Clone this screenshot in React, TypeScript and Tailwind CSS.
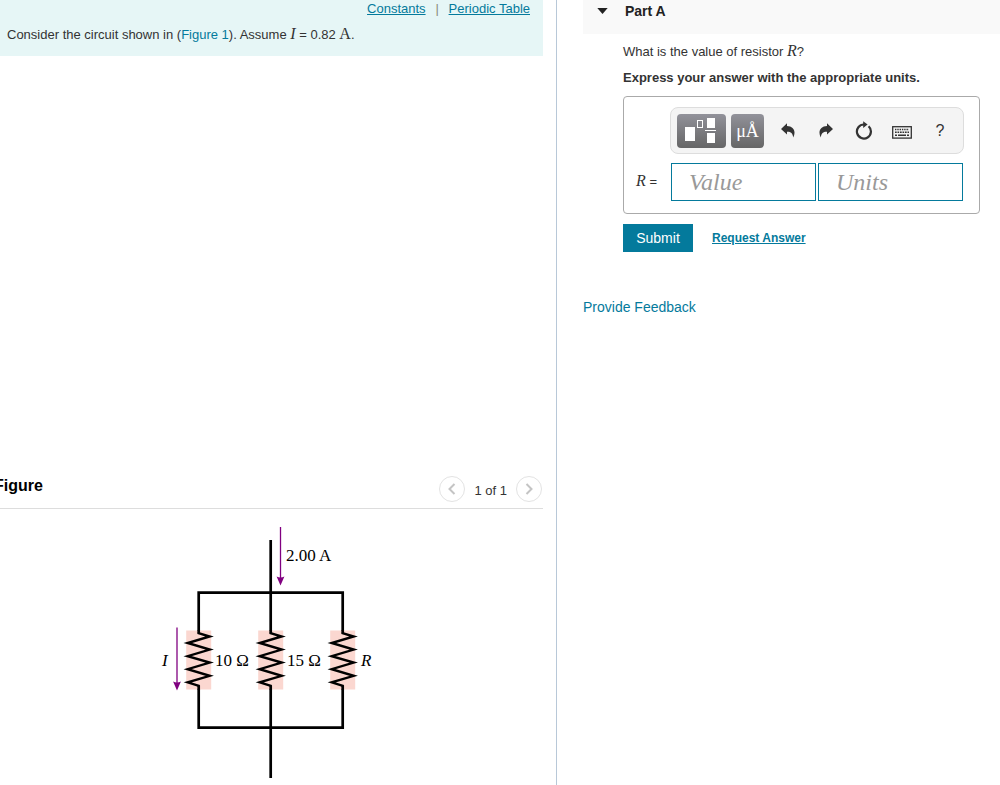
import React from 'react'

interface ResistorProps {
    x: number
}

//zigzag is 54px tall, centred on the wire at x
const Resistor = ({ x }: ResistorProps) => {
    return (
        <g transform={`translate(${x} 106)`}>
            <rect x="-12.5" y="0.5" width="25" height="59" fill="#fbd7d0" />
            <path d="M0 0 V3.6 M0 55.6 V60" stroke="#000" strokeWidth="2.7" />
            <path
                d="M-1 2.8 L11 6.5 L-11 13 L11 19.6 L-11 26.2 L11 32.6 L-11 39.2 L11 45.8 L-11 52.4 L1 56.2"
                fill="none"
                stroke="#000"
                strokeWidth="2.4"
                strokeLinejoin="miter"
            />
        </g>
    )
}

interface ArrowProps {
    x: number
    y1: number
    y2: number
}

const Arrow = ({ x, y1, y2 }: ArrowProps) => {
    return (
        <g transform={`translate(${x} 0)`}>
            <path d={`M0 ${y1} V${y2 - 6}`} stroke="#800080" strokeWidth="1.3" />
            <path d={`M0 ${y2} L-3.9 ${y2 - 9} Q0 ${y2 - 7} 3.9 ${y2 - 9} Z`} fill="#800080" />
        </g>
    )
}

const Circuit = () => {
    return (
        <svg
            width="221"
            height="256"
            viewBox="0 0 221 256"
            role="img"
            aria-label="Circuit diagram"
            className="mx-auto block font-['Liberation_Serif',serif] text-[17px]"
        >
            <g fill="none" stroke="#000" strokeWidth="2.7">
                <path d="M109.7 16 V109 M109.7 162 V254" />
                <path d="M37.7 109 V68.7 H181.7 V109" />
                <path d="M37.7 162 V203.7 H181.7 V162" />
            </g>
            <Resistor x={37.7} />
            <Resistor x={109.7} />
            <Resistor x={181.7} />
            <Arrow x={119.5} y1={3} y2={61.5} />
            <Arrow x={16} y1={103.5} y2={166.5} />
            <text x="125" y="37">2.00 A</text>
            <text x="1" y="142" fontStyle="italic">I</text>
            <text x="54" y="142">10 Ω</text>
            <text x="126" y="142">15 Ω</text>
            <text x="200" y="142" fontStyle="italic">R</text>
        </svg>
    )
}

const UndoIcon = () => (
    <svg width="14" height="15" viewBox="0 0 14 15" fill="#333">
        <path d="M6 0.3 L0 6 L6 11.6 V8.8 C9.6 8.6 11.6 10 12.2 14.6 C15.4 8.4 12.6 3.2 6 3 Z" />
    </svg>
)

const RedoIcon = () => (
    <svg width="14" height="15" viewBox="0 0 14 15" fill="#333">
        <path d="M8 0.3 L14 6 L8 11.6 V8.8 C4.4 8.6 2.4 10 1.8 14.6 C-1.4 8.4 1.4 3.2 8 3 Z" />
    </svg>
)

const ResetIcon = () => (
    <svg width="18" height="19" viewBox="0 0 18 19">
        <path d="M13.6 5.3 A7 7 0 1 1 9 3.5" fill="none" stroke="#333" strokeWidth="2.2" />
        <path d="M8.2 0.2 L12.6 3.6 L8.2 7 Z" fill="#333" />
    </svg>
)

const KeyboardIcon = () => (
    <svg width="20" height="13" viewBox="0 0 20 13" fill="none" stroke="#333">
        <rect x="0.7" y="0.7" width="18.6" height="11.4" strokeWidth="1.3" />
        <path d="M3 3.5 H17" strokeWidth="1.5" strokeDasharray="1.4 0.9" />
        <path d="M3 6.2 H17" strokeWidth="1.5" strokeDasharray="1.7 0.8" />
        <path d="M3 9.2 H5 M6 9.2 H14 M15 9.2 H17" strokeWidth="1.5" />
    </svg>
)

const TemplatesIcon = () => (
    <svg width="34" height="26" viewBox="0 0 34 26" fill="#fff">
        <rect x="0" y="9" width="10" height="14" />
        <rect x="12.5" y="2.5" width="5" height="7" fill="none" stroke="#fff" />
        <rect x="22" y="0" width="8" height="10" />
        <rect x="20" y="12" width="11" height="1" />
        <rect x="22" y="15" width="8" height="10" />
    </svg>
)

const toolButton = "flex w-[38px] h-8 items-center justify-center"
const darkButton = "flex h-[34px] items-center justify-center rounded-sm bg-gradient-to-b from-[#92929a] to-[#666666] text-white"
const pagerButton = "flex size-[26px] items-center justify-center rounded-full border border-[#e3e3e3] text-[#c4c4c4]"
const answerInput = "h-[38px] w-full min-w-0 border border-[#047a9c] bg-white px-[17px] font-['Liberation_Serif',serif] text-2xl italic text-[#333] placeholder:text-[#999] placeholder:opacity-100 outline-none"
const mathItalic = "font-['Liberation_Serif',serif] text-base leading-4 italic"

const App = () => {
    return (
        <div className="flex min-h-screen overflow-hidden bg-white font-['Liberation_Sans',Arial,sans-serif] text-[13px] leading-4 text-[#333]">
            {/* problem + figure */}
            <div className="flex w-[55.7%] flex-col border-r border-[#b8c8d8] pr-[13px]">
                <div className="h-14 bg-[#e6f6f6] pt-px pr-[13px] pl-[7px]">
                    <div className="flex justify-end text-[#047a9c]">
                        <a href="#constants" className="underline">Constants</a>
                        <span className="w-[23px] text-center text-[#8a8a7a]">|</span>
                        <a href="#periodic-table" className="underline">Periodic Table</a>
                    </div>
                    <p className="mt-[9px]">
                        Consider the circuit shown in (<a href="#figure" className="text-[#047a9c]">Figure 1</a>). Assume{' '}
                        <span className={mathItalic}>I</span> = 0.82{' '}
                        <span className="font-['Liberation_Serif',serif] text-base leading-4">A</span>.
                    </p>
                </div>

                <div id="figure" className="mt-auto">
                    <div className="-ml-1.5 flex items-start justify-between border-b border-[#dddddd] pb-1.5">
                        <h2 className="pt-[2px] text-base leading-4 font-bold text-black">Figure</h2>
                        <div className="flex items-center gap-[9px] pr-px">
                            <button type="button" aria-label="Previous figure" className={pagerButton}>
                                <svg width="8" height="12" viewBox="0 0 8 12" fill="none" stroke="currentColor" strokeWidth="2">
                                    <path d="M6.5 1 L1.5 6 L6.5 11" />
                                </svg>
                            </button>
                            <span className="pt-1">1 of 1</span>
                            <button type="button" aria-label="Next figure" className={pagerButton}>
                                <svg width="8" height="12" viewBox="0 0 8 12" fill="none" stroke="currentColor" strokeWidth="2">
                                    <path d="M1.5 1 L6.5 6 L1.5 11" />
                                </svg>
                            </button>
                        </div>
                    </div>
                    <div className="pt-[15px] pb-[5px]">
                        <Circuit />
                    </div>
                </div>
            </div>

            {/* answer */}
            <div className="min-w-0 flex-1 pl-[26px]">
                <button type="button" className="flex h-[34px] w-full items-start bg-[#f9f9f9] pt-[3px] pl-[14px] text-left text-sm leading-4 font-bold text-[#222]">
                    <svg width="11" height="16" viewBox="0 0 11 16" fill="#222" className="mr-[17px]">
                        <path d="M0.3 5 H10.7 L5.5 11 Z" />
                    </svg>
                    Part A
                </button>

                <div className="pr-5 pl-10">
                    <p className="mt-[9px]">
                        What is the value of resistor <span className={mathItalic}>R</span>?
                    </p>
                    <p className="mt-[10px] font-bold">Express your answer with the appropriate units.</p>

                    <div className="mt-[10px] flex rounded border border-[#aaaaaa] pt-[10px] pr-4 pb-3 pl-3">
                        <label htmlFor="value" className="w-[35px] shrink-0 pt-[66px]">
                            <span className={mathItalic}>R</span> =
                        </label>
                        <div className="min-w-0 flex-1">
                            <div className="-mx-px flex h-[47px] items-center rounded-lg border border-[#dddddd] bg-[#f4f4f4] pl-1.5">
                                <button type="button" aria-label="Templates" className={`${darkButton} w-[49px]`}>
                                    <TemplatesIcon />
                                </button>
                                <button type="button" aria-label="Symbols" className={`${darkButton} ml-[5px] w-[33px] font-['Liberation_Serif',serif] text-lg`}>
                                    μÅ
                                </button>
                                <div className="ml-[5px] flex">
                                    <button type="button" aria-label="Undo" className={toolButton}><UndoIcon /></button>
                                    <button type="button" aria-label="Redo" className={toolButton}><RedoIcon /></button>
                                    <button type="button" aria-label="Reset" className={toolButton}><ResetIcon /></button>
                                    <button type="button" aria-label="Keyboard shortcuts" className={`${toolButton} pt-[3px]`}><KeyboardIcon /></button>
                                    <button type="button" className={`${toolButton} text-base`}>?</button>
                                </div>
                            </div>
                            <div className="mt-[9px] grid grid-cols-2 gap-0.5">
                                <input id="value" type="text" placeholder="Value" className={answerInput} />
                                <input type="text" aria-label="Units" placeholder="Units" className={answerInput} />
                            </div>
                        </div>
                    </div>

                    <div className="mt-[10px] flex items-center">
                        <button type="button" className="h-7 w-[70px] bg-[#047a9c] text-sm text-white">Submit</button>
                        <a href="#request-answer" className="ml-[19px] text-xs font-bold text-[#047a9c] underline">Request Answer</a>
                    </div>
                </div>

                <a href="#feedback" className="mt-[47px] inline-block text-sm leading-4 text-[#047a9c]">Provide Feedback</a>
            </div>
        </div>
    )
}

export default App
